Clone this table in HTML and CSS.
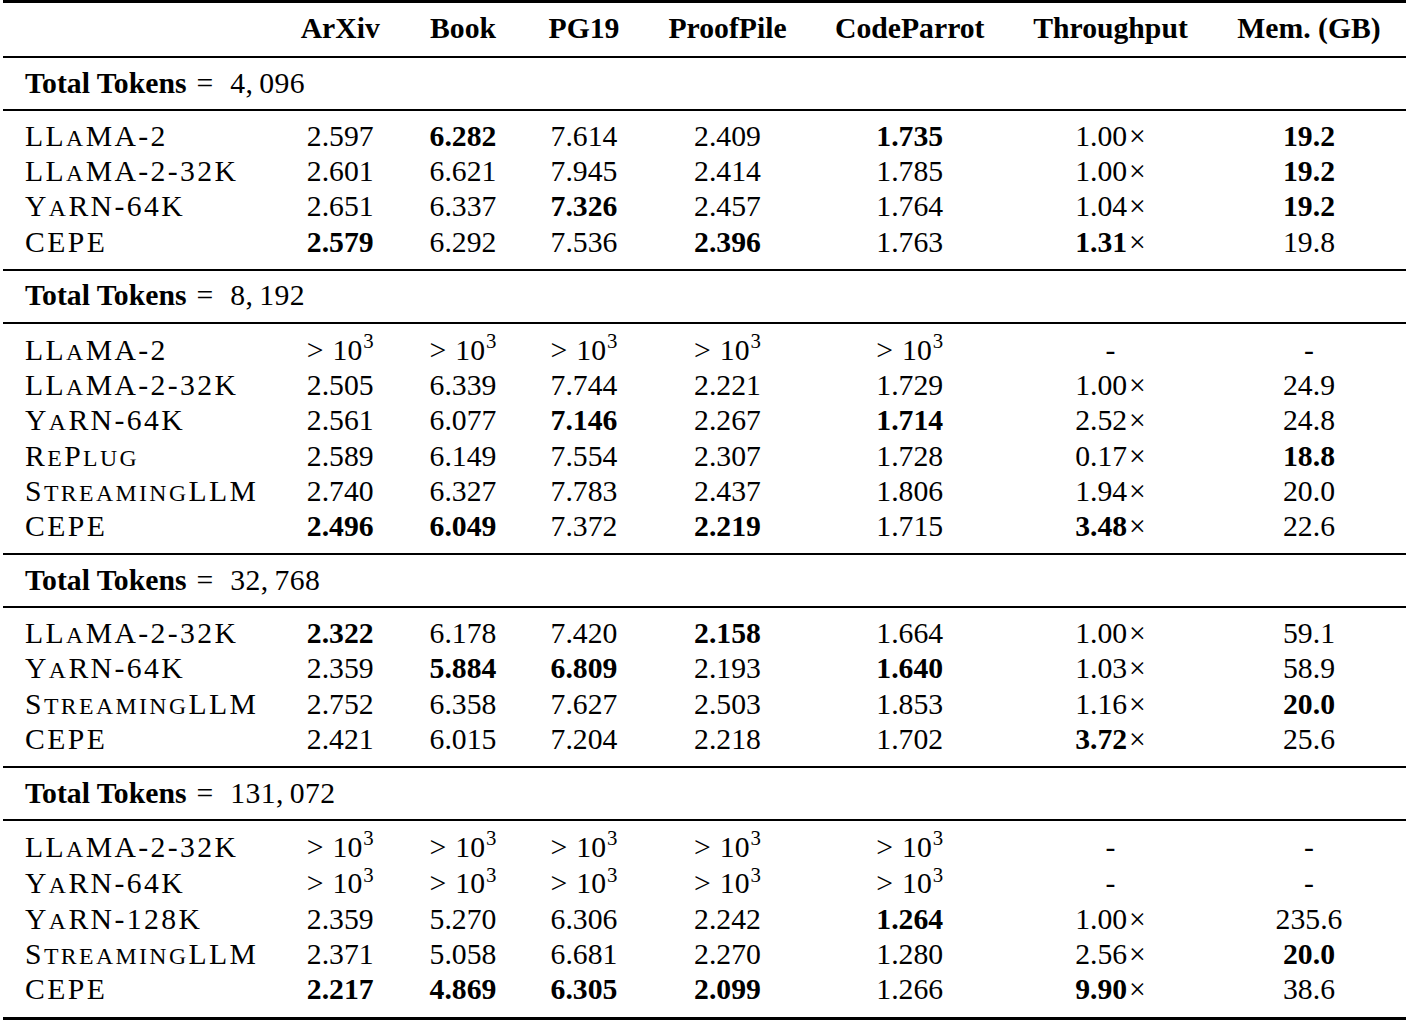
FILE: index.html
```html
<!DOCTYPE html>
<html lang="en">
<head>
<meta charset="utf-8">
<title>Perplexity results</title>
<link rel="stylesheet" href="styles.css">
</head>
<body>
<div class="table">
  <div class="rule-heavy"></div>
  <div class="head">
    <div class="row">
      <div class="name"></div>
      <div class="cell">ArXiv</div>
      <div class="cell">Book</div>
      <div class="cell">PG19</div>
      <div class="cell">ProofPile</div>
      <div class="cell">CodeParrot</div>
      <div class="cell">Throughput</div>
      <div class="cell">Mem. (GB)</div>
    </div>
  </div>
  <div class="rule"></div>

  <div class="total"><b>Total Tokens</b><span class="eq">=</span><span class="num">4,<span class="thin"></span>096</span></div>
  <div class="rule"></div>
  <div class="group">
    <div class="row"><div class="name">LL<span class="sc">a</span>MA-2</div><div class="cell">2.597</div><div class="cell"><b>6.282</b></div><div class="cell">7.614</div><div class="cell">2.409</div><div class="cell"><b>1.735</b></div><div class="cell">1.00<span class="x">×</span></div><div class="cell"><b>19.2</b></div></div>
    <div class="row"><div class="name">LL<span class="sc">a</span>MA-2-32K</div><div class="cell">2.601</div><div class="cell">6.621</div><div class="cell">7.945</div><div class="cell">2.414</div><div class="cell">1.785</div><div class="cell">1.00<span class="x">×</span></div><div class="cell"><b>19.2</b></div></div>
    <div class="row"><div class="name">Y<span class="sc">a</span>RN-64K</div><div class="cell">2.651</div><div class="cell">6.337</div><div class="cell"><b>7.326</b></div><div class="cell">2.457</div><div class="cell">1.764</div><div class="cell">1.04<span class="x">×</span></div><div class="cell"><b>19.2</b></div></div>
    <div class="row"><div class="name">CEPE</div><div class="cell"><b>2.579</b></div><div class="cell">6.292</div><div class="cell">7.536</div><div class="cell"><b>2.396</b></div><div class="cell">1.763</div><div class="cell"><b>1.31</b><span class="x">×</span></div><div class="cell">19.8</div></div>
  </div>
  <div class="rule"></div>

  <div class="total"><b>Total Tokens</b><span class="eq">=</span><span class="num">8,<span class="thin"></span>192</span></div>
  <div class="rule"></div>
  <div class="group">
    <div class="row sup"><div class="name">LL<span class="sc">a</span>MA-2</div><div class="cell"><span class="gt">&gt;</span>10<sup>3</sup></div><div class="cell"><span class="gt">&gt;</span>10<sup>3</sup></div><div class="cell"><span class="gt">&gt;</span>10<sup>3</sup></div><div class="cell"><span class="gt">&gt;</span>10<sup>3</sup></div><div class="cell"><span class="gt">&gt;</span>10<sup>3</sup></div><div class="cell">-</div><div class="cell">-</div></div>
    <div class="row"><div class="name">LL<span class="sc">a</span>MA-2-32K</div><div class="cell">2.505</div><div class="cell">6.339</div><div class="cell">7.744</div><div class="cell">2.221</div><div class="cell">1.729</div><div class="cell">1.00<span class="x">×</span></div><div class="cell">24.9</div></div>
    <div class="row"><div class="name">Y<span class="sc">a</span>RN-64K</div><div class="cell">2.561</div><div class="cell">6.077</div><div class="cell"><b>7.146</b></div><div class="cell">2.267</div><div class="cell"><b>1.714</b></div><div class="cell">2.52<span class="x">×</span></div><div class="cell">24.8</div></div>
    <div class="row"><div class="name">R<span class="sc">e</span>P<span class="sc">lug</span></div><div class="cell">2.589</div><div class="cell">6.149</div><div class="cell">7.554</div><div class="cell">2.307</div><div class="cell">1.728</div><div class="cell">0.17<span class="x">×</span></div><div class="cell"><b>18.8</b></div></div>
    <div class="row"><div class="name">S<span class="sc">treaming</span>LLM</div><div class="cell">2.740</div><div class="cell">6.327</div><div class="cell">7.783</div><div class="cell">2.437</div><div class="cell">1.806</div><div class="cell">1.94<span class="x">×</span></div><div class="cell">20.0</div></div>
    <div class="row"><div class="name">CEPE</div><div class="cell"><b>2.496</b></div><div class="cell"><b>6.049</b></div><div class="cell">7.372</div><div class="cell"><b>2.219</b></div><div class="cell">1.715</div><div class="cell"><b>3.48</b><span class="x">×</span></div><div class="cell">22.6</div></div>
  </div>
  <div class="rule"></div>

  <div class="total"><b>Total Tokens</b><span class="eq">=</span><span class="num">32,<span class="thin"></span>768</span></div>
  <div class="rule"></div>
  <div class="group">
    <div class="row"><div class="name">LL<span class="sc">a</span>MA-2-32K</div><div class="cell"><b>2.322</b></div><div class="cell">6.178</div><div class="cell">7.420</div><div class="cell"><b>2.158</b></div><div class="cell">1.664</div><div class="cell">1.00<span class="x">×</span></div><div class="cell">59.1</div></div>
    <div class="row"><div class="name">Y<span class="sc">a</span>RN-64K</div><div class="cell">2.359</div><div class="cell"><b>5.884</b></div><div class="cell"><b>6.809</b></div><div class="cell">2.193</div><div class="cell"><b>1.640</b></div><div class="cell">1.03<span class="x">×</span></div><div class="cell">58.9</div></div>
    <div class="row"><div class="name">S<span class="sc">treaming</span>LLM</div><div class="cell">2.752</div><div class="cell">6.358</div><div class="cell">7.627</div><div class="cell">2.503</div><div class="cell">1.853</div><div class="cell">1.16<span class="x">×</span></div><div class="cell"><b>20.0</b></div></div>
    <div class="row"><div class="name">CEPE</div><div class="cell">2.421</div><div class="cell">6.015</div><div class="cell">7.204</div><div class="cell">2.218</div><div class="cell">1.702</div><div class="cell"><b>3.72</b><span class="x">×</span></div><div class="cell">25.6</div></div>
  </div>
  <div class="rule"></div>

  <div class="total"><b>Total Tokens</b><span class="eq">=</span><span class="num">131,<span class="thin"></span>072</span></div>
  <div class="rule"></div>
  <div class="group">
    <div class="row sup"><div class="name">LL<span class="sc">a</span>MA-2-32K</div><div class="cell"><span class="gt">&gt;</span>10<sup>3</sup></div><div class="cell"><span class="gt">&gt;</span>10<sup>3</sup></div><div class="cell"><span class="gt">&gt;</span>10<sup>3</sup></div><div class="cell"><span class="gt">&gt;</span>10<sup>3</sup></div><div class="cell"><span class="gt">&gt;</span>10<sup>3</sup></div><div class="cell">-</div><div class="cell">-</div></div>
    <div class="row sup"><div class="name">Y<span class="sc">a</span>RN-64K</div><div class="cell"><span class="gt">&gt;</span>10<sup>3</sup></div><div class="cell"><span class="gt">&gt;</span>10<sup>3</sup></div><div class="cell"><span class="gt">&gt;</span>10<sup>3</sup></div><div class="cell"><span class="gt">&gt;</span>10<sup>3</sup></div><div class="cell"><span class="gt">&gt;</span>10<sup>3</sup></div><div class="cell">-</div><div class="cell">-</div></div>
    <div class="row"><div class="name">Y<span class="sc">a</span>RN-128K</div><div class="cell">2.359</div><div class="cell">5.270</div><div class="cell">6.306</div><div class="cell">2.242</div><div class="cell"><b>1.264</b></div><div class="cell">1.00<span class="x">×</span></div><div class="cell">235.6</div></div>
    <div class="row"><div class="name">S<span class="sc">treaming</span>LLM</div><div class="cell">2.371</div><div class="cell">5.058</div><div class="cell">6.681</div><div class="cell">2.270</div><div class="cell">1.280</div><div class="cell">2.56<span class="x">×</span></div><div class="cell"><b>20.0</b></div></div>
    <div class="row"><div class="name">CEPE</div><div class="cell"><b>2.217</b></div><div class="cell"><b>4.869</b></div><div class="cell"><b>6.305</b></div><div class="cell"><b>2.099</b></div><div class="cell">1.266</div><div class="cell"><b>9.90</b><span class="x">×</span></div><div class="cell">38.6</div></div>
  </div>
  <div class="rule-heavy"></div>
</div>
</body>
</html>
```

FILE: styles.css
```css
html, body {
  margin: 0;
  padding: 0;
  background: #ffffff;
}

body {
  color: #000000;
  font-family: "Liberation Serif", "Times New Roman", serif;
  font-size: 29.7px;
}

.table {
  width: 1403px;
  margin-left: 3px;
}

.rule-heavy {
  height: 3px;
  background: #000000;
}

.rule {
  height: 2px;
  background: #000000;
}

.head {
  padding: 7.5px 0 10.5px;
  font-weight: bold;
}

.group {
  padding: 7.5px 0 9px;
}

.row {
  display: grid;
  grid-template-columns: 275px 124.5px 121px 121px 166px 198.5px 203px 194px;
  height: 35.3px;
  line-height: 35.3px;
}

.row.sup {
  padding-top: 1.2px;
}

.cell {
  text-align: center;
  white-space: nowrap;
}

.name {
  text-align: left;
  padding-left: 22px;
  letter-spacing: 2.4px;
  white-space: nowrap;
}

.sc {
  font-size: 0.8em;
  text-transform: uppercase;
}

.total {
  padding: 7.5px 0 8.5px 22px;
  height: 35px;
  line-height: 35px;
  white-space: nowrap;
}

.eq {
  margin: 0 17px 0 10px;
}

.num {
  letter-spacing: 0.4px;
}

.thin {
  display: inline-block;
  width: 6px;
}

.x {
  margin-left: 2px;
}

.gt {
  margin-right: 9px;
}

sup {
  font-size: 0.7em;
  line-height: 0;
  vertical-align: 0.55em;
  margin-left: 1px;
}
```
